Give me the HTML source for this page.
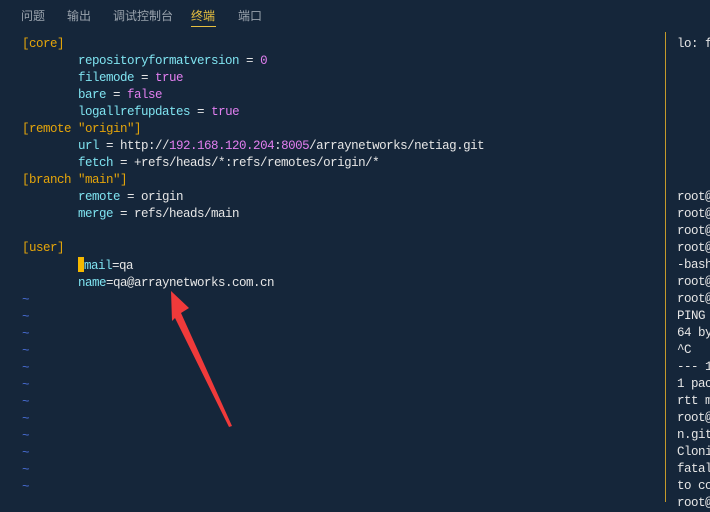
<!DOCTYPE html><html><head><style>
body{margin:0;width:710px;height:502px;background:#15263a;overflow:hidden;position:relative;font-family:"Liberation Mono",monospace;font-size:12.5px;letter-spacing:-0.5px}
.tab{position:absolute;top:7px;font:12px "Liberation Sans","Noto Sans CJK SC",sans-serif;color:#9aa3ad;letter-spacing:0}
.l{position:absolute;left:22px;white-space:pre;line-height:17px;color:#e6e6e6;top:36px}
.y{color:#e5a50a}.c{color:#7fe3f0}.p{color:#e27ff0}.t{color:#4a6fd8}
.r{position:absolute;left:677px;white-space:pre;color:#e6e6e6;line-height:17px}
</style></head><body>
<div class="tab" style="left:21px">问题</div>
<div class="tab" style="left:67px">输出</div>
<div class="tab" style="left:113px">调试控制台</div>
<div class="tab" style="left:191px;color:#e8c040">终端</div>
<div style="position:absolute;left:191px;top:26px;width:25px;height:1px;background:#e8c040"></div>
<div class="tab" style="left:238px">端口</div>
<div style="position:absolute;left:665px;top:32px;width:1px;height:470px;background:#c49a2a"></div>
<div class="l"><span class="y">[core]</span>
        <span class="c">repositoryformatversion</span> = <span class="p">0</span>
        <span class="c">filemode</span> = <span class="p">true</span>
        <span class="c">bare</span> = <span class="p">false</span>
        <span class="c">logallrefupdates</span> = <span class="p">true</span>
<span class="y">[remote "origin"]</span>
        <span class="c">url</span> = http://<span class="p">192.168.120.204</span>:<span class="p">8005</span>/arraynetworks/netiag.git
        <span class="c">fetch</span> = +refs/heads/*:refs/remotes/origin/*
<span class="y">[branch "main"]</span>
        <span class="c">remote</span> = origin
        <span class="c">merge</span> = refs/heads/main

<span class="y">[user]</span>
        <span style="background:#f5b800;display:inline-block;width:6px;height:15px;vertical-align:-3px"></span><span class="c">mail</span>=qa
        <span class="c">name</span>=qa@arraynetworks.com.cn
<span class="t">~
~
~
~
~
~
~
~
~
~
~
~</span></div>
<div class="r" style="top:36px">lo: f</div>
<div class="r" style="top:189px">root@
root@
root@
root@
-bash
root@
root@
PING 
64 by
^C
--- 1
1 pac
rtt m
root@
n.git
Cloni
fatal
to co
root@</div>
<svg style="position:absolute;left:0;top:0" width="710" height="502"><polygon points="171,291 189,308 181,313 232,426 229,427 175,318 172,321" fill="#f03a3a"/></svg>
</body></html>
